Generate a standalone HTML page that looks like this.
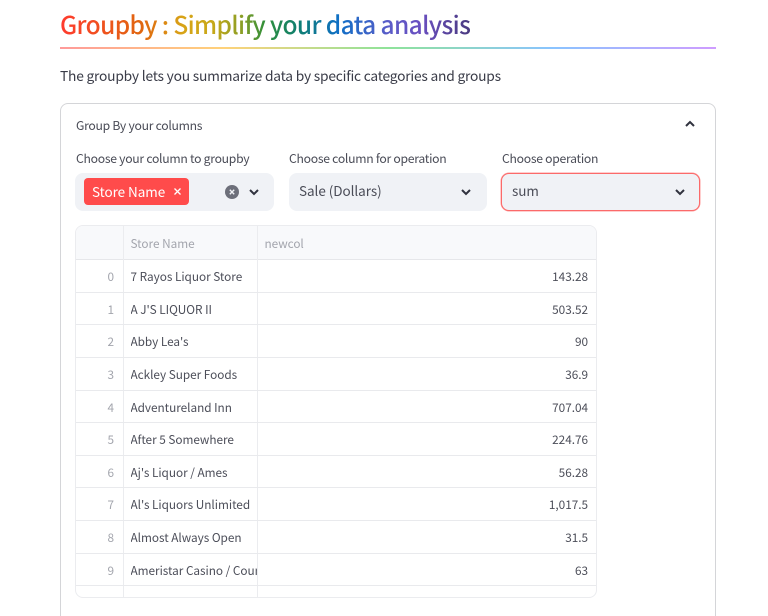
<!DOCTYPE html>
<html><head><meta charset="utf-8">
<style>
html,body{margin:0;padding:0;background:#fff;width:768px;height:616px;overflow:hidden}
body{position:relative;font-family:"Noto Sans CJK JP","Liberation Sans",sans-serif;color:#31333f}
.a{position:absolute;white-space:nowrap}
.title{left:60px;top:6px;font-size:24.5px;letter-spacing:-.62px;line-height:38px;font-weight:500;background:linear-gradient(90deg,#ff3a2e 0%,#e0670f 20%,#d8a417 30%,#c8a818 37%,#8f9f25 44%,#2f8f3a 50%,#0f7f70 58%,#0f6fc6 68%,#5a5cc8 80%,#6a4fc0 88%,#4a3a80 100%);-webkit-background-clip:text;background-clip:text;color:transparent}
.rule{left:60px;top:47px;width:656px;height:2px;background:linear-gradient(90deg,#ff9a9a,#ffd27a 25%,#8fe39a 50%,#8ac4ff 75%,#cf9cff)}
.p{left:60px;top:64px;font-size:13.8px;letter-spacing:-.22px;line-height:23px;color:#3a3c48}
.card{left:60px;top:103px;width:654px;height:530px;border:1px solid #d4d5d8;border-radius:8px;box-sizing:content-box}
.l{font-size:12.2px;letter-spacing:-.28px;line-height:18px;color:#4a4c57}
.box{background:#f0f2f6;border-radius:8px;height:38px;top:173px;box-sizing:border-box}
.tag{left:84px;top:178px;width:105px;height:27px;background:#ff4b4b;border-radius:4px;color:#fff;font-size:13.5px;letter-spacing:-.05px;line-height:26px;text-indent:8px}
.v{font-size:13.5px;letter-spacing:-.05px;line-height:20px;top:180px;color:#4a4c57}
.grid{left:75px;top:225px;width:522px;height:373px;border:1px solid #ebecef;border-radius:8px;overflow:hidden;box-sizing:border-box;background:#fff}
.hd{position:absolute;left:0;top:0;width:100%;height:34px;background:#f8f9fb;border-bottom:1px solid #e6e7ea;box-sizing:border-box}
.vl{position:absolute;top:0;bottom:0;width:1px;background:#ebecef}
.hl{position:absolute;left:0;right:0;height:1px;background:#e9eaed}
.t{position:absolute;font-size:11.8px;letter-spacing:-.03px;line-height:18px;white-space:nowrap;margin-top:1px}
.n{color:#a3a5ad;right:482px;text-align:right}
.s{left:54.5px;width:126.5px;overflow:hidden;color:#4c4e59}
.r{right:8px;text-align:right;color:#4c4e59}
.h{color:#a3a5ad}
svg{position:absolute;overflow:visible}
</style></head><body>
<div class="a title">Groupby : Simplify your data analysis</div>
<div class="a rule"></div>
<div class="a p">The groupby lets you summarize data by specific categories and groups</div>
<div class="a card"></div>
<div class="a l" style="left:76px;top:116px">Group By your columns</div>
<svg style="left:684px;top:118px" width="12" height="12" viewBox="0 0 12 12"><path d="M2 8L6 4L10 8" fill="none" stroke="#31333f" stroke-width="2"/></svg>
<div class="a l" style="left:76px;top:149px">Choose your column to groupby</div>
<div class="a l" style="left:289px;top:149px">Choose column for operation</div>
<div class="a l" style="left:502px;top:149px">Choose operation</div>
<div class="a box" style="left:75px;width:199px"></div>
<div class="a box" style="left:289px;width:198px"></div>
<div class="a box" style="left:501px;width:199px;border:1px solid #fb6a6a;box-shadow:0 0 0 .5px #ff9d9d;background:#f0f2f6"></div>
<div class="a tag">Store Name</div>
<svg style="left:173px;top:187px" width="9" height="9" viewBox="0 0 9 9"><path d="M1.5 1.5L7.5 7.5M7.5 1.5L1.5 7.5" stroke="#fff" stroke-width="1.3"/></svg>
<svg style="left:225px;top:185px" width="14" height="14" viewBox="0 0 14 14"><circle cx="7" cy="7" r="7" fill="#6d6f7a"/><path d="M4.8 4.8L9.2 9.2M9.2 4.8L4.8 9.2" stroke="#f0f2f6" stroke-width="1.4"/></svg>
<svg style="left:248px;top:186px" width="12" height="12" viewBox="0 0 12 12"><path d="M2 4L6 8L10 4" fill="none" stroke="#31333f" stroke-width="2"/></svg>
<svg style="left:460px;top:186px" width="12" height="12" viewBox="0 0 12 12"><path d="M2 4L6 8L10 4" fill="none" stroke="#31333f" stroke-width="2"/></svg>
<svg style="left:674px;top:186px" width="12" height="12" viewBox="0 0 12 12"><path d="M2 4L6 8L10 4" fill="none" stroke="#31333f" stroke-width="2"/></svg>
<div class="a v" style="left:299px">Sale (Dollars)</div>
<div class="a v" style="left:512px">sum</div>
<div class="a grid">
<div class="hd"></div>
<div class="vl" style="left:47px"></div>
<div class="vl" style="left:181px"></div>
<div class="hl" style="top:66px"></div>
<div class="hl" style="top:98px"></div>
<div class="hl" style="top:131px"></div>
<div class="hl" style="top:164px"></div>
<div class="hl" style="top:196px"></div>
<div class="hl" style="top:229px"></div>
<div class="hl" style="top:261px"></div>
<div class="hl" style="top:294px"></div>
<div class="hl" style="top:327px"></div>
<div class="hl" style="top:359px"></div>
<div class="t h" style="left:54.5px;top:8px">Store Name</div>
<div class="t h" style="left:188.5px;top:8px">newcol</div>
<div class="t n" style="top:41px">0</div><div class="t s" style="top:41px">7 Rayos Liquor Store</div><div class="t r" style="top:41px">143.28</div>
<div class="t n" style="top:74px">1</div><div class="t s" style="top:74px">A J'S LIQUOR II</div><div class="t r" style="top:74px">503.52</div>
<div class="t n" style="top:106px">2</div><div class="t s" style="top:106px">Abby Lea's</div><div class="t r" style="top:106px">90</div>
<div class="t n" style="top:139px">3</div><div class="t s" style="top:139px">Ackley Super Foods</div><div class="t r" style="top:139px">36.9</div>
<div class="t n" style="top:172px">4</div><div class="t s" style="top:172px">Adventureland Inn</div><div class="t r" style="top:172px">707.04</div>
<div class="t n" style="top:204px">5</div><div class="t s" style="top:204px">After 5 Somewhere</div><div class="t r" style="top:204px">224.76</div>
<div class="t n" style="top:237px">6</div><div class="t s" style="top:237px">Aj's Liquor / Ames</div><div class="t r" style="top:237px">56.28</div>
<div class="t n" style="top:269px">7</div><div class="t s" style="top:269px">Al's Liquors Unlimited</div><div class="t r" style="top:269px">1,017.5</div>
<div class="t n" style="top:302px">8</div><div class="t s" style="top:302px">Almost Always Open</div><div class="t r" style="top:302px">31.5</div>
<div class="t n" style="top:335px">9</div><div class="t s" style="top:335px">Ameristar Casino / Council Bluffs</div><div class="t r" style="top:335px">63</div>
</div>
</body></html>
